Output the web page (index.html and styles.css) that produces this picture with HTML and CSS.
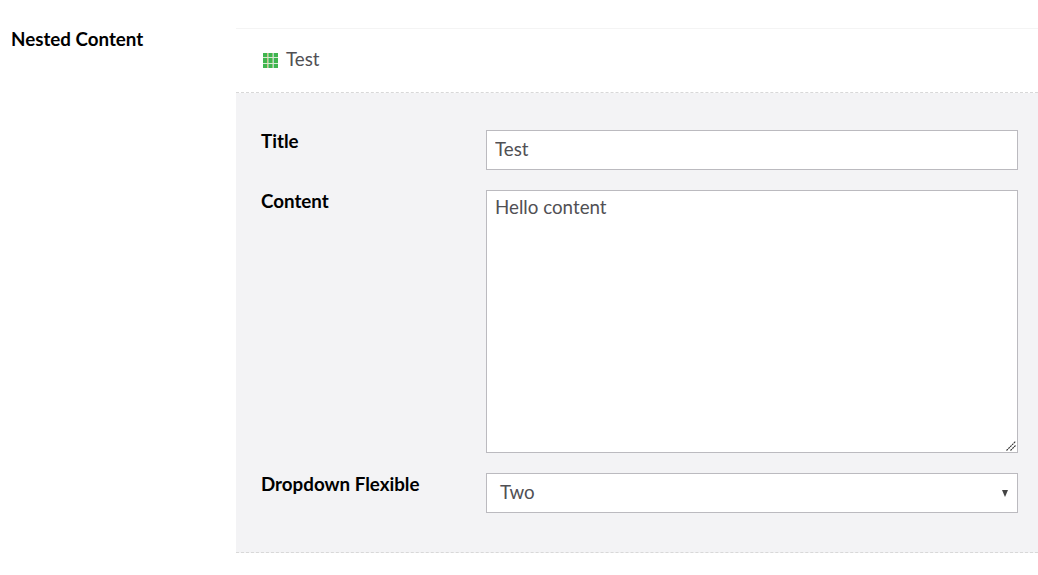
FILE: index.html
```html
<!DOCTYPE html>
<html lang="en">
<head>
<meta charset="utf-8">
<title>Nested Content</title>
<link rel="stylesheet" href="styles.css">
</head>
<body>
<div class="property">
  <div class="property-label">Nested Content</div>
  <div class="nested">
    <div class="nested-header">
      <svg class="grid-icon" width="15" height="15" viewBox="0 0 15 15" aria-hidden="true">
        <rect x="4" y="0" width="0.8" height="15" fill="#e0b060"/><rect x="4.8" y="0" width="0.7" height="15" fill="#90d4c8"/>
        <rect x="9.5" y="0" width="0.8" height="15" fill="#e0b060"/><rect x="10.3" y="0" width="0.7" height="15" fill="#90d4c8"/>
        <rect x="0" y="0" width="4" height="15" fill="#3fb54f"/>
        <rect x="5.5" y="0" width="4" height="15" fill="#3fb54f"/>
        <rect x="11" y="0" width="4" height="15" fill="#3fb54f"/>
        <rect x="0" y="4" width="15" height="1" fill="#d8ead2"/>
        <rect x="0" y="10" width="15" height="1" fill="#d8ead2"/>
      </svg>
      <span class="nested-title">Test</span>
    </div>
    <div class="panel">
      <div class="row row-title">
        <label class="row-label">Title</label>
        <input class="field text-field" type="text" value="Test">
      </div>
      <div class="row row-content">
        <label class="row-label">Content</label>
        <div class="area-wrap">
          <textarea class="field area-field">Hello content</textarea>
          <svg class="resize-grip" width="10" height="10" viewBox="0 0 10 10" aria-hidden="true">
            <path d="M0.5 9.5 L9.5 0.5 M4.5 9.5 L9.5 4.5" stroke="#333" stroke-width="1.1" stroke-dasharray="2 0.6" fill="none"/>
          </svg>
        </div>
      </div>
      <div class="row">
        <label class="row-label">Dropdown Flexible</label>
        <div class="field select-field"><span>Two</span><span class="caret"></span></div>
      </div>
    </div>
  </div>
</div>
</body>
</html>
```
FILE: styles.css
```css
* { box-sizing: border-box; }
html, body { margin: 0; padding: 0; background: #fff; }
body {
  width: 1038px;
  height: 575px;
  overflow: hidden;
  font-family: Lato, sans-serif;
  font-size: 18.75px;
  color: #000;
}
.property {
  display: flex;
  padding-top: 27px;
}
.property-label {
  width: 236px;
  padding: 0 0 0 11px;
  font-weight: 700;
  line-height: 24px;
  flex: none;
}
.nested {
  flex: 1;
  margin-top: 1px;
  border-top: 1px solid #f4f4f4;
}
.nested-header {
  height: 64px;
  display: flex;
  align-items: center;
  padding: 0 0 2px 27px;
  border-bottom: 1px dashed #d8d8d8;
  color: #515054;
}
.grid-icon { flex: none; margin: 1px 8px 0 0; }
.nested-title { line-height: 24px; margin-top: -2px; }
.panel {
  background: #f3f3f5;
  height: 460px;
  padding: 37px 20px 0 25px;
  border-bottom: 1px dashed #d8d8d8;
}
.row {
  display: flex;
  align-items: flex-start;
}
.row-title { margin-bottom: 20px; }
.row-content { margin-bottom: 20px; }
.row-label {
  width: 225px;
  flex: none;
  font-weight: 700;
  line-height: 24px;
  margin-top: -1px;
}
.field {
  display: block;
  width: 532px;
  border: 1px solid #bbbabf;
  background: #fff;
  color: #515054;
  font: 18.75px/24px Lato, sans-serif;
  border-radius: 0;
  outline: none;
  margin: 0;
}
.text-field { height: 40px; padding: 0 8px 4px; }
.area-wrap { position: relative; width: 532px; height: 263px; }
.area-field { height: 263px; padding: 4px 8px; resize: none; }
.resize-grip { position: absolute; right: 2px; bottom: 2px; }
.select-field {
  height: 40px;
  padding: 0 9px 3px 13px;
  display: flex;
  align-items: center;
  justify-content: space-between;
}
.caret {
  width: 0;
  height: 0;
  border-left: 3.5px solid transparent;
  border-right: 3.5px solid transparent;
  border-top: 7px solid #444;
  margin: 4px 0 0;
}
```
